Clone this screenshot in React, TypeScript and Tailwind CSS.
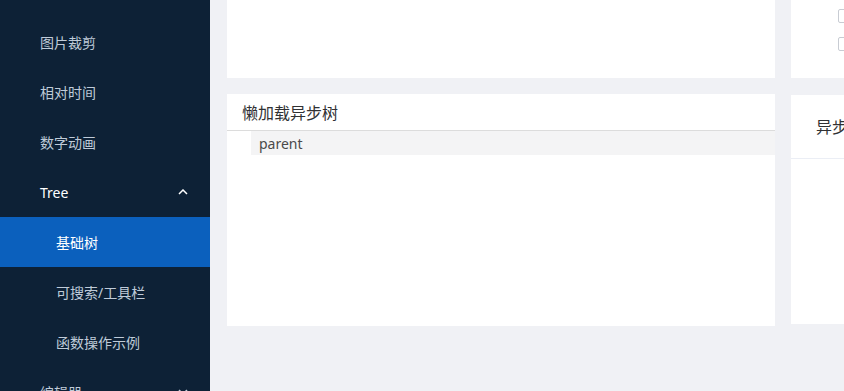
import React from "react";

const font = { fontFamily: '"Noto Sans", "Noto Sans CJK SC", sans-serif' };

function Item({ label, sub, active, white, chevron, down }: { label: string; sub?: boolean; active?: boolean; white?: boolean; chevron?: boolean; down?: boolean }) {
  return (
    <div
      className={
        "h-[50px] shrink-0 flex items-center justify-between pr-[22px] text-[14px] " +
        (sub ? "pl-[56px] " : "pl-[40px] ") +
        (active ? "bg-[#0b60bd] text-white " : white ? "text-white " : "text-[#bfcbd9] ")
      }
    >
      <span>{label}</span>
      {chevron && (
        <svg width="10" height="6" viewBox="0 0 10 6" fill="none">
          <path d={down ? "M1 1 L5 5 L9 1" : "M1 5 L5 1 L9 5"} stroke={down ? "#bfcbd9" : "#ffffff"} strokeWidth="1.5" />
        </svg>
      )}
    </div>
  );
}

export default function App() {
  return (
    <div className="w-[844px] h-[391px] flex overflow-hidden bg-[#f0f1f5]" style={font}>
      <aside className="w-[210px] shrink-0 bg-[#0d2136] pt-[17px] flex flex-col overflow-hidden">
        <Item label="图片裁剪" />
        <Item label="相对时间" />
        <Item label="数字动画" />
        <Item label="Tree" white chevron />
        <Item label="基础树" sub active />
        <Item label="可搜索/工具栏" sub />
        <Item label="函数操作示例" sub />
        <Item label="编辑器" chevron down />
      </aside>
      <main className="flex-1 pl-[17px] flex gap-[16px] min-w-0">
        <div className="w-[548px] shrink-0 flex flex-col gap-[16px]">
          <div className="h-[78px] bg-white" />
          <div className="h-[232px] bg-white flex flex-col">
            <div className="h-[37px] pl-[15px] pt-[1px] flex items-center text-[16px] text-[#303133] border-b border-[#dcdcdc]">
              懒加载异步树
            </div>
            <div className="ml-[24px] h-[24px] bg-[#f4f4f5] flex items-center pl-[8px] text-[14px] text-[#4a4a4a]">
              parent
            </div>
          </div>
        </div>
        <div className="flex-1 flex flex-col gap-[17px] min-w-0">
          <div className="h-[78px] bg-white flex flex-col gap-[14px] pt-[9px] pl-[47px]">
            <div className="w-[14px] h-[14px] border border-[#c8ccd3] rounded-[2px] shrink-0" />
            <div className="w-[14px] h-[14px] border border-[#c8ccd3] rounded-[2px] shrink-0" />
          </div>
          <div className="h-[229px] bg-white flex flex-col">
            <div className="h-[64px] pl-[25px] flex items-center text-[16px] text-[#303133] border-b border-[#ebeef5] whitespace-nowrap">
              异步加载树
            </div>
          </div>
        </div>
      </main>
    </div>
  );
}
